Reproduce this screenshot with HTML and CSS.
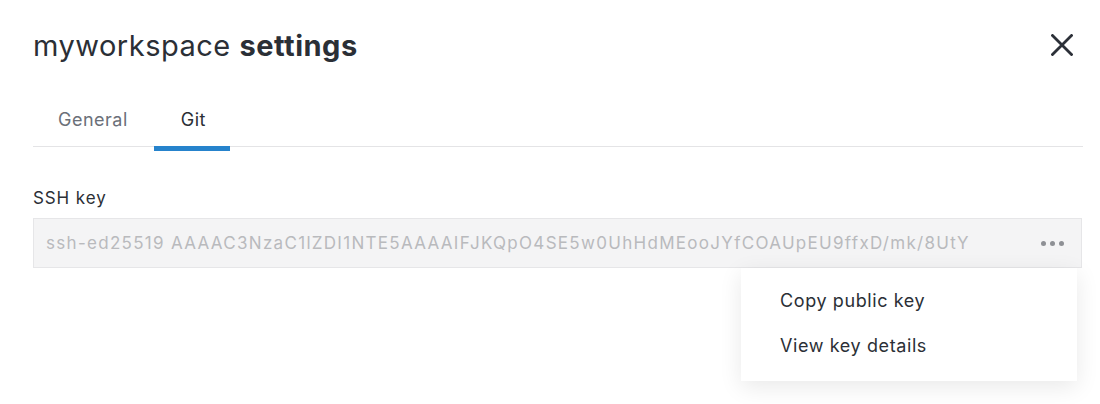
FILE: index.html
```html
<!DOCTYPE html>
<html lang="en">
<head>
    <meta charset="UTF-8">
    <meta name="viewport" content="width=device-width, initial-scale=1.0">
    <title>myworkspace settings</title>
    <link rel="stylesheet" href="styles.css">
</head>
<body>
    <div class="dialog">
        <div class="header">
            <h1>myworkspace <b>settings</b></h1>
            <button class="close" aria-label="Close">
                <svg width="22" height="22" viewBox="0 0 22 22">
                    <path d="M1.5 1.5 L20.5 20.5 M20.5 1.5 L1.5 20.5" stroke="#2c3038" stroke-width="2.8" stroke-linecap="square" fill="none"/>
                </svg>
            </button>
        </div>

        <!-- tabs -->
        <div class="tabs">
            <div class="tab">General</div>
            <div class="tab active">Git</div>
        </div>

        <div class="field">
            <div class="label">SSH key</div>
            <div class="key-box">
                <span class="key-text">ssh-ed25519 AAAAC3NzaC1lZDI1NTE5AAAAIFJKQpO4SE5w0UhHdMEooJYfCOAUpEU9ffxD/mk/8UtY</span>
                <span class="dots"><i></i><i></i><i></i></span>
            </div>

            <!-- open dropdown for the key -->
            <div class="actions-row">
                <div class="key-actions">
                    <div class="action">Copy public key</div>
                    <div class="action">View key details</div>
                </div>
            </div>
        </div>
    </div>
</body>
</html>
```

FILE: styles.css
```css
body {
    margin: 0;
    font-family: Inter, "Noto Sans", sans-serif;
    color: #2b2f36;
    background: #fff;
}
.dialog {
    padding: 0 17px 23px 33px;
}
.header {
    height: 90px;
    display: flex;
    align-items: center;
    justify-content: space-between;
}
.header h1 {
    margin: 0;
    font-size: 29px;
    font-weight: 400;
    letter-spacing: 0.5px;
}
.header h1 b {
    font-weight: 700;
}
.close {
    border: none;
    background: none;
    padding: 0;
    margin-right: 10px;
    width: 22px;
    height: 22px;
    display: flex;
}
.tabs {
    display: flex;
    border-bottom: 1px solid #e4e4e6;
}
.tab {
    position: relative;
    padding: 19px 25px 15px;
    line-height: 22px;
    font-size: 18px;
    letter-spacing: 0.5px;
    color: #6b7079;
}
.tab.active {
    color: #2b2f36;
    padding: 19px 24px 15px 27px;
    margin-left: 1px;
}
.tab.active::after {
    content: "";
    position: absolute;
    left: 0;
    right: 0;
    bottom: -5px;
    height: 5px;
    background: #2683cc;
}
.field {
    margin-top: 40px;
}
.label {
    font-size: 17px;
    line-height: 22px;
    letter-spacing: 0.9px;
    margin-bottom: 9px;
}
.key-box {
    height: 48px;
    display: flex;
    align-items: center;
    justify-content: space-between;
    background: #f4f4f5;
    border: 1px solid #e6e6e8;
    padding: 0 17px 0 12px;
    margin-right: 1px;
}
.key-text {
    font-size: 17px;
    letter-spacing: 1.3px;
    color: #b9babd;
    white-space: nowrap;
}
.dots {
    display: flex;
    gap: 4px;
}
.dots i {
    width: 5px;
    height: 5px;
    border-radius: 50%;
    background: #8e9095;
}
.actions-row {
    display: flex;
    justify-content: flex-end;
    padding-right: 6px;
}
.key-actions {
    width: 336px;
    padding: 10px 0 13px;
    background: #fff;
    box-shadow: 0 6px 22px rgba(0, 0, 0, 0.09);
}
.action {
    height: 45px;
    line-height: 45px;
    padding-left: 39px;
    font-size: 18px;
    letter-spacing: 0.6px;
    color: #2b2f36;
}
```
